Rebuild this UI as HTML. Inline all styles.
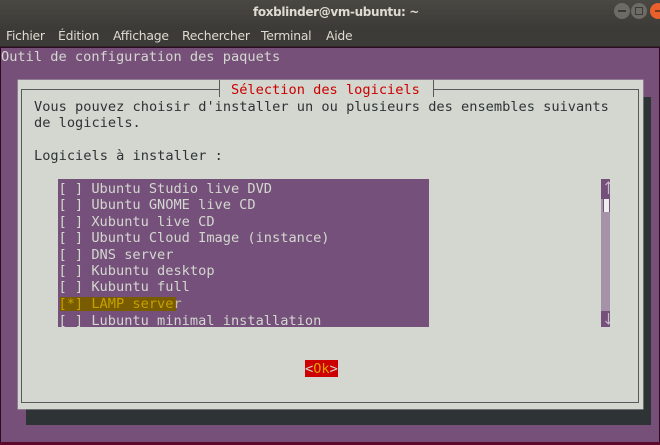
<!DOCTYPE html>
<html lang="fr"><head><meta charset="utf-8"><style>
html,body{margin:0;padding:0;background:#2c001e}
#r{position:relative;width:660px;height:445px;overflow:hidden;background:#5c0a2c}
#r div{position:absolute}
.t{font:13.65px/16.4px "DejaVu Sans Mono",monospace;white-space:pre;color:#2e3436;filter:blur(.25px)}
.m{font:12.4px/20px "DejaVu Sans",sans-serif;color:#dfdbd2;top:26px;white-space:pre;letter-spacing:-.25px;filter:blur(.2px)}
</style></head><body><div id="r">
<div style="left:0;top:0;width:660px;height:46px;background:linear-gradient(#4a4843,#3c3b37 60%)"></div>
<div style="left:0;top:1px;width:660px;text-align:center;font:bold 12px/22px 'DejaVu Sans',sans-serif;color:#dfdbd2;padding-left:12px;box-sizing:border-box;letter-spacing:-.35px;filter:blur(.2px)">foxblinder@vm-ubuntu: ~</div>
<div class="m" style="left:6px">Fichier</div>
<div class="m" style="left:58px">Édition</div>
<div class="m" style="left:113px">Affichage</div>
<div class="m" style="left:182px">Rechercher</div>
<div class="m" style="left:261px">Terminal</div>
<div class="m" style="left:326px">Aide</div>
<div style="left:614px;top:3px;width:16px;height:16px;border-radius:50%;background:#6d6b65"></div>
<div style="left:618px;top:10px;width:8px;height:2px;background:#3c3b37"></div>
<div style="left:631px;top:3px;width:16px;height:16px;border-radius:50%;background:#6d6b65"></div>
<div style="left:635px;top:7px;width:6px;height:6px;border:1px solid #3c3b37"></div>
<div style="left:650px;top:3px;width:16px;height:16px;border-radius:50%;background:#e9602c"></div>
<div style="left:655px;top:10px;width:5px;height:2px;background:#7a3a1c"></div>
<div style="left:0;top:46px;width:660px;height:1px;background:#2a2926"></div>

<div style="left:0;top:47px;width:660px;height:395px;background:#300a24"></div>
<div style="left:1px;top:48px;width:658px;height:394px;background:#77507a"></div>
<div class="t" style="left:1px;top:49px;color:#d3d7cf">Outil de configuration des paquets</div>

<div style="left:26px;top:97px;width:625px;height:328px;background:#2e3436"></div>
<div style="left:18px;top:80px;width:625px;height:329px;background:#d3d7cf;box-shadow:0 0 0 .5px #a9a9a9"></div>
<div style="left:21px;top:89px;width:616px;height:312px;border:1px solid #555a5a"></div>
<div style="left:219px;top:80px;width:213px;height:17px;background:#d3d7cf;border-left:1px solid #555a5a;border-right:1px solid #555a5a"></div>
<div class="t" style="left:231px;top:81.5px;color:#cc0000">Sélection des logiciels</div>
<div class="t" style="left:34px;top:99px">Vous pouvez choisir d'installer un ou plusieurs des ensembles suivants
de logiciels.

Logiciels à installer :</div>

<div style="left:58px;top:179px;width:371px;height:148px;background:#75507b"></div>
<div class="t" style="left:58.5px;top:181px;color:#d3d7cf">[ ] Ubuntu Studio live DVD
[ ] Ubuntu GNOME live CD
[ ] Xubuntu live CD
[ ] Ubuntu Cloud Image (instance)
[ ] DNS server
[ ] Kubuntu desktop
[ ] Kubuntu full</div>
<div style="left:60px;top:297px;width:116px;height:14px;background:#7a5c00"></div>
<div class="t" style="left:58.5px;top:296px;color:#c4a000">[*] LAMP serve<span style="color:#c9c0a0">r</span></div>
<div style="left:58px;top:311px;width:371px;height:16px;overflow:hidden"><div class="t" style="left:.5px;top:1.5px;color:#d3d7cf">[ ] Lubuntu minimal installation</div></div>

<div style="left:601px;top:179px;width:9px;height:148px;background:#a692a8"></div>
<div style="left:601px;top:179px;width:9px;height:20px;background:#75507b"></div>
<div style="left:603px;top:199px;width:7px;height:13px;background:#eeeeec;border-left:1px solid #75507b;border-right:1px solid #75507b;box-sizing:border-box"></div>
<div style="left:601px;top:311px;width:9px;height:16px;background:#75507b"></div>
<svg style="position:absolute;left:601px;top:179px" width="9" height="148" fill="none" stroke="#c9bccb" stroke-width="1.2"><path d="M7.5 3V15M4.5 6L7.5 3L9 5"/><path d="M7.5 134V145M4.5 142L7.5 145L9 143"/></svg>

<div style="left:305px;top:360px;width:33px;height:17px;background:#cc0000"></div>
<div class="t" style="left:305px;top:361px;color:#d3d7cf">&lt;<span style="color:#e0a000">Ok</span>&gt;</div>
</div></body></html>
